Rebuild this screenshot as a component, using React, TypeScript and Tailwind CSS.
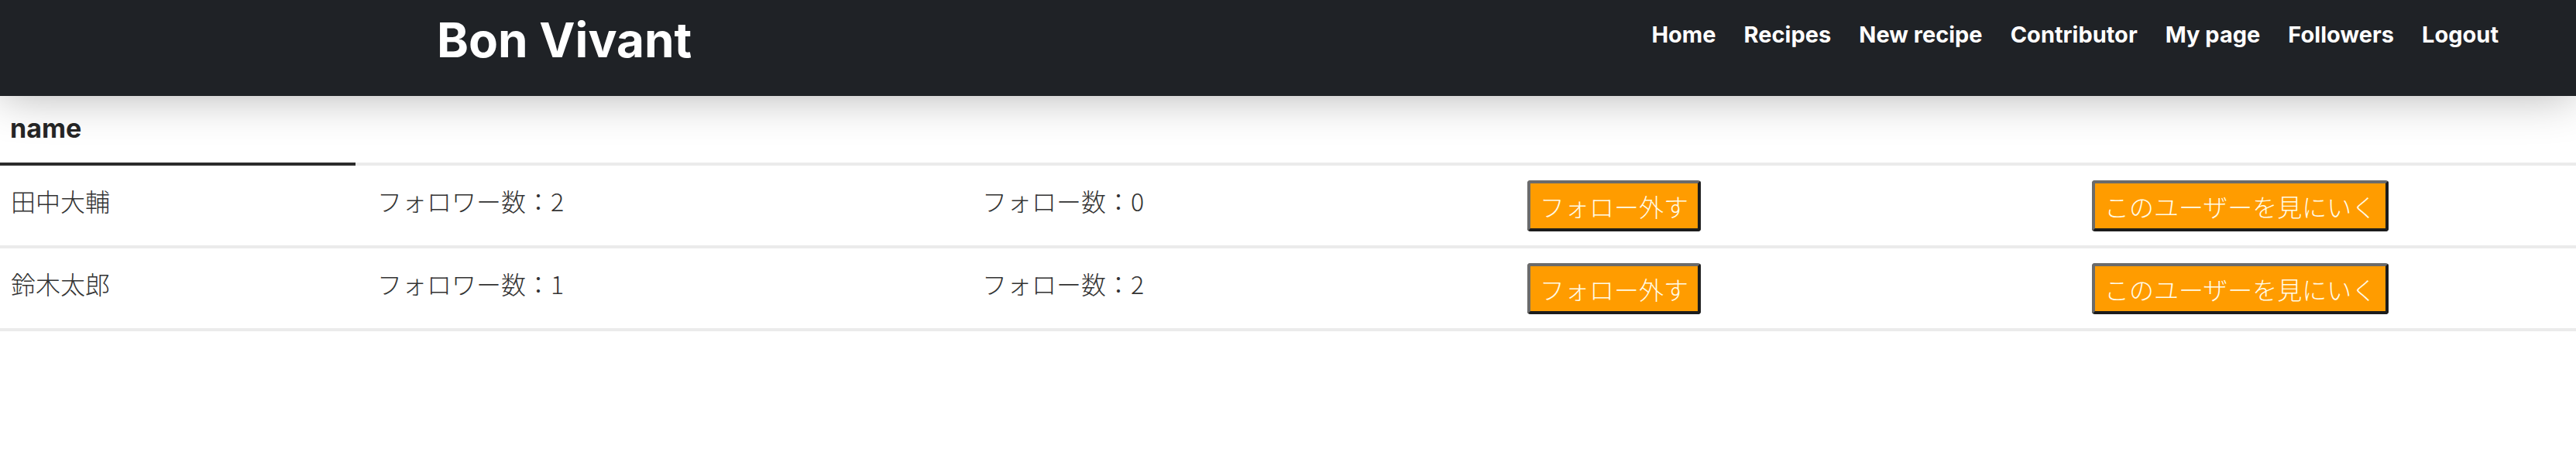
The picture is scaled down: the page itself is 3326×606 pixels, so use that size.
import React from 'react';

type Follower = {
  id: number;
  name: string;
  followers: number;
  following: number;
};

const followers: Follower[] = [
  { id: 1, name: '田中大輔', followers: 2, following: 0 },
  { id: 2, name: '鈴木太郎', followers: 1, following: 2 },
];

const navLinks = ['Home', 'Recipes', 'New recipe', 'Contributor', 'My page', 'Followers', 'Logout'];

const OrangeButton: React.FC<{ children: React.ReactNode }> = ({ children }) => (
  <button className="flex h-[66px] items-center rounded-[4px] border-[4px] border-t-[#6b6b6b] border-l-[#6b6b6b] border-r-[#1c1c1c] border-b-[#1c1c1c] bg-[#ff9c00] px-[12px] text-[32px] leading-none font-light text-[#fffbe8] font-['Noto_Sans_CJK_JP',sans-serif]">
    {children}
  </button>
);

const App: React.FC = () => {
  return (
    <div className="min-h-[606px] bg-white font-['Noto_Sans_CJK_JP',sans-serif]">
      <nav className="relative z-10 flex h-[124px] justify-between bg-[#1f2226] pl-[564px] pr-[100px] shadow-[0_0_60px_rgba(0,0,0,0.3)]">
        <a className="mt-[21px] font-['Inter',sans-serif] text-[62px] leading-[62px] font-bold text-white">
          Bon Vivant
        </a>
        <ul className="mt-[30px] flex gap-[36px] font-['Inter',sans-serif] text-[29px] leading-[29px] font-bold text-white">
          {navLinks.map(link => (
            <li key={link}>{link}</li>
          ))}
        </ul>
      </nav>

      <div className="flex h-[90px] border-b-[4px] border-[#ebebeb]">
        <div className="-mb-[4px] h-[90px] w-[459px] border-b-[4px] border-[#2b2b2b] pl-[13px] pt-[25px] font-['Inter',sans-serif] text-[34px] leading-[34px] font-bold text-[#262626]">
          name
        </div>
      </div>

      {followers.map(user => (
        <div
          key={user.id}
          className="grid h-[107px] grid-cols-[487px_781px_704px_729px_1fr] items-center border-b-[4px] border-[#ebebeb] text-[32px] font-light text-[#333333]"
        >
          <span className="pb-[14px] pl-[14px]">{user.name}</span>
          <span className="pb-[14px]">フォロワー数：{user.followers}</span>
          <span className="pb-[14px]">フォロー数：{user.following}</span>
          <div>
            <OrangeButton>フォロー外す</OrangeButton>
          </div>
          <div>
            <OrangeButton>このユーザーを見にいく</OrangeButton>
          </div>
        </div>
      ))}
    </div>
  );
};

export default App;
